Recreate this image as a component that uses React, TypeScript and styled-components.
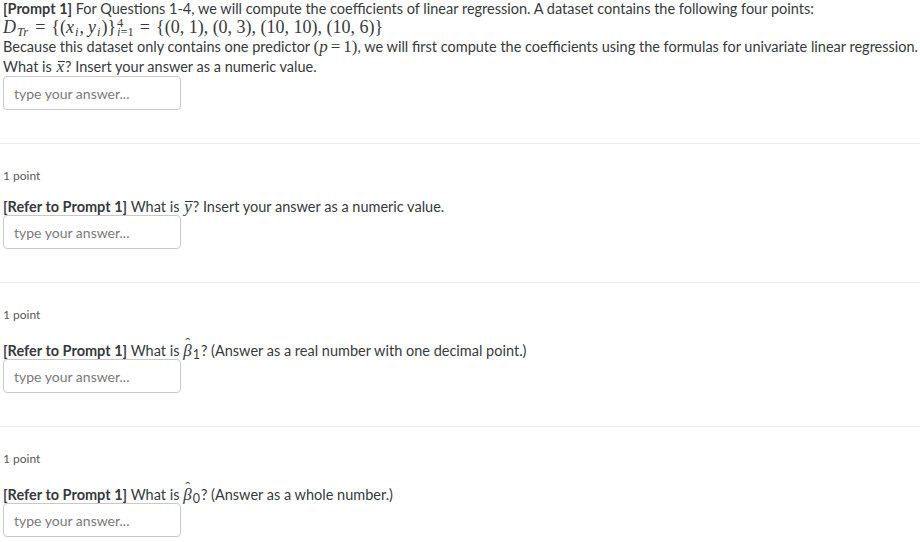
import React from "react";
import styled, { createGlobalStyle } from "styled-components";

const Global = createGlobalStyle`
  html, body { margin: 0; padding: 0; background: #fff; }
  body {
    font-family: Lato, "Open Sans", sans-serif;
    font-size: 14.5px;
    color: #373a3c;
  }
`;

const Page = styled.div`
  width: 920px;
  display: flex;
  flex-direction: column;
`;

const Section = styled.section<{ $first?: boolean }>`
  display: flex;
  flex-direction: column;
  align-items: flex-start;
  padding: ${(p) => (p.$first ? "0 3px 33px" : "25px 3px 33px")};
  border-top: ${(p) => (p.$first ? "none" : "1px solid #ececec")};
`;

const Line = styled.div<{ $lh: number }>`
  height: ${(p) => p.$lh}px;
  line-height: ${(p) => p.$lh}px;
  white-space: nowrap;
`;

const Bold = styled.b`
  font-weight: 700;
`;

const Points = styled.div`
  font-size: 12px;
  line-height: 14px;
  color: #585858;
`;

const Question = styled.div<{ $tall?: boolean }>`
  margin-top: ${(p) => (p.$tall ? "20px" : "15px")};
  height: 17px;
  line-height: 17px;
  white-space: nowrap;
`;

const Math = styled.span<{ $size: number }>`
  font-family: "Liberation Serif", "DejaVu Serif", serif;
  font-size: ${(p) => p.$size}px;
`;

const MI = styled.i`
  font-style: italic;
  font-family: "Liberation Serif", "DejaVu Serif", serif;
`;

const Op = styled.span<{ $gap: number }>`
  margin: 0 ${(p) => p.$gap}px;
`;

const Comma = styled.span`
  margin-right: 4px;
`;

const Scripts = styled.span`
  display: inline-flex;
  flex-direction: column;
  vertical-align: 6px;
  font-size: 12.5px;
  line-height: 9px;
  margin-left: 1px;
`;

const Sub = styled.sub`
  font-size: 12.5px;
  vertical-align: -3px;
  line-height: 0;
  margin: 0 1px;
`;

const Bar = styled.span`
  position: relative;
  display: inline-block;
  line-height: 17px;
  font-family: "Liberation Serif", "DejaVu Serif", serif;
  font-style: italic;
  font-size: 17px;
  padding: 0 1px;
  &::after {
    content: "";
    position: absolute;
    left: 2px;
    right: 0;
    top: 3px;
    height: 1px;
    background: #373a3c;
  }
`;

const Hatted = styled.span`
  position: relative;
  display: inline-block;
  line-height: 17px;
  font-family: "Liberation Serif", "DejaVu Serif", serif;
  font-style: italic;
  font-size: 17px;
`;

const Hat = styled.span`
  position: absolute;
  left: 2px;
  top: -7px;
  font-style: normal;
  font-size: 15px;
`;

const Answer = styled.input`
  box-sizing: border-box;
  width: 178px;
  height: 34px;
  padding: 0 10px;
  border: 1px solid #c8c8c8;
  border-radius: 4px;
  font-family: Lato, sans-serif;
  font-size: 14px;
  color: #333;
  outline: none;
  &::placeholder { color: #7a7a7a; }
`;

const Beta = ({ n }: { n: string }) => (
  <>
    <Hatted>
      β<Hat>ˆ</Hat>
    </Hatted>
    <Sub>{n}</Sub>
  </>
);

export default function App() {
  return (
    <Page>
      <Global />
      <Section $first>
        <Line $lh={17}>
          <Bold>[Prompt 1]</Bold> For Questions 1-4, we will compute the coefficients of linear regression. A dataset contains the following four points:
        </Line>
        <Line $lh={20}>
          <Math $size={18}>
            <MI>D</MI>
            <Sub>
              <MI>Tr</MI>
            </Sub>
            <Op $gap={6}>=</Op>
            {"{"}(<MI>x</MI>
            <Sub>
              <MI>i</MI>
            </Sub>
            <Comma>,</Comma>
            <MI>y</MI>
            <Sub>
              <MI>i</MI>
            </Sub>
            ){"}"}
            <Scripts>
              <span>4</span>
              <span>
                <MI>i</MI>=1
              </span>
            </Scripts>
            <Op $gap={6}>=</Op>
            {"{"}(0,&nbsp;1),&nbsp;(0,&nbsp;3),&nbsp;(10,&nbsp;10),&nbsp;(10,&nbsp;6){"}"}
          </Math>
        </Line>
        <Line $lh={20}>
          Because this dataset only contains one predictor{" "}
          <Math $size={17}>
            (<MI>p</MI>
            <Op $gap={3}>=</Op>1)
          </Math>
          , we will first compute the coefficients using the formulas for univariate linear regression.
        </Line>
        <Line $lh={19}>
          What is <Bar>x</Bar>? Insert your answer as a numeric value.
        </Line>
        <Answer placeholder="type your answer..." />
      </Section>
      <Section>
        <Points>1 point</Points>
        <Question>
          <Bold>[Refer to Prompt 1]</Bold> What is <Bar>y</Bar>? Insert your answer as a numeric value.
        </Question>
        <Answer placeholder="type your answer..." />
      </Section>
      <Section>
        <Points>1 point</Points>
        <Question $tall>
          <Bold>[Refer to Prompt 1]</Bold> What is <Beta n="1" />? (Answer as a real number with one decimal point.)
        </Question>
        <Answer placeholder="type your answer..." />
      </Section>
      <Section>
        <Points>1 point</Points>
        <Question $tall>
          <Bold>[Refer to Prompt 1]</Bold> What is <Beta n="0" />? (Answer as a whole number.)
        </Question>
        <Answer placeholder="type your answer..." />
      </Section>
    </Page>
  );
}
